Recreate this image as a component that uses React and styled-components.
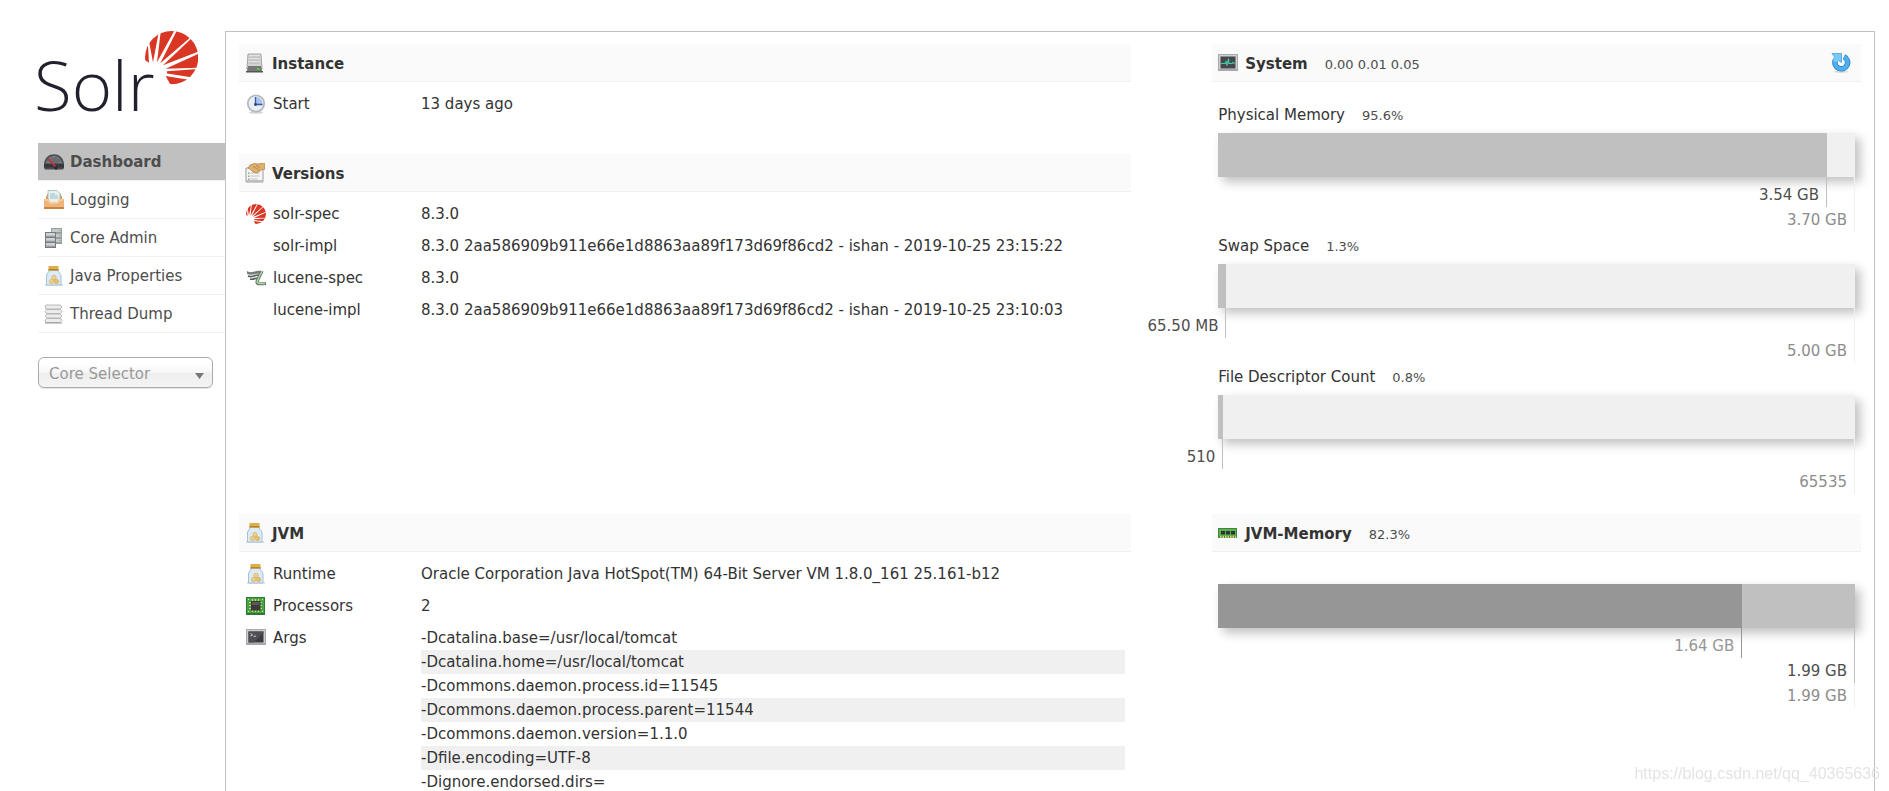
import { styled, createGlobalStyle } from 'styled-components';

const navItems = [
  { label: 'Dashboard', icon: 'gauge', active: true },
  { label: 'Logging', icon: 'tray' },
  { label: 'Core Admin', icon: 'racks' },
  { label: 'Java Properties', icon: 'jar' },
  { label: 'Thread Dump', icon: 'stack' },
];

const versions = [
  { label: 'solr-spec', icon: 'sun', value: '8.3.0' },
  { label: 'solr-impl', value: '8.3.0 2aa586909b911e66e1d8863aa89f173d69f86cd2 - ishan - 2019-10-25 23:15:22' },
  { label: 'lucene-spec', icon: 'lucene', value: '8.3.0' },
  { label: 'lucene-impl', value: '8.3.0 2aa586909b911e66e1d8863aa89f173d69f86cd2 - ishan - 2019-10-25 23:10:03' },
];

const args = [
  '-Dcatalina.base=/usr/local/tomcat',
  '-Dcatalina.home=/usr/local/tomcat',
  '-Dcommons.daemon.process.id=11545',
  '-Dcommons.daemon.process.parent=11544',
  '-Dcommons.daemon.version=1.1.0',
  '-Dfile.encoding=UTF-8',
  '-Dignore.endorsed.dirs=',
];

const tones = {
  total: { bar: '#f0f0f0', text: '#8d8d8d' },
  max: { bar: '#c0c0c0', text: '#4d4d4d' },
  used: { bar: '#969696', text: '#969696' },
};

const systemBars = [
  {
    label: 'Physical Memory',
    percent: '95.6%',
    marks: [
      { tone: 'max', share: 95.6, text: '3.54 GB' },
      { tone: 'total', share: 100, text: '3.70 GB' },
    ],
  },
  {
    label: 'Swap Space',
    percent: '1.3%',
    marks: [
      { tone: 'max', share: 1.3, text: '65.50 MB' },
      { tone: 'total', share: 100, text: '5.00 GB' },
    ],
  },
  {
    label: 'File Descriptor Count',
    percent: '0.8%',
    marks: [
      { tone: 'max', share: 0.8, text: '510' },
      { tone: 'total', share: 100, text: '65535' },
    ],
  },
];

const jvmMarks = [
  { tone: 'used', share: 82.3, text: '1.64 GB' },
  { tone: 'max', share: 100, text: '1.99 GB' },
  { tone: 'total', share: 100, text: '1.99 GB' },
];

/* rays of the Solr sun, drawn on a 160 x 160 disc */
const SunRays = () => (
  <>
    <clipPath id="disc"><circle cx="80" cy="80" r="80" /></clipPath>
    <g clipPath="url(#disc)" fill="#d93624">
      <path d="M12 95 L-12 80 L8 26 Z" />
      <path d="M24 94 L12 30 L36 -6 L42 0 Z" />
      <path d="M36 94 L48 -4 L92 -8 Z" />
      <path d="M46 97 L98 -6 L142 14 Z" />
      <path d="M54 103 L144 18 L170 58 Z" />
      <path d="M62 113 L170 64 L168 110 Z" />
      <path d="M66 121 L166 114 L158 142 L66 128 Z" />
      <path d="M62 135 L140 148 L110 170 L76 160 Z" />
    </g>
  </>
);

/* every drawing sits on a 20 x 20 canvas */
const drawings = {
  server: (
    <>
      <path d="M3 1h13l1 15H2z" fill="#d3d3d3" stroke="#a5a5a5" />
      <path d="M4 3h11M4 6h11M4 9h11" stroke="#f2f2f2" />
      <path d="M4 4h11M4 7h11M4 10h11" stroke="#b3b3b3" />
      <path d="M3 13h13l1 5H2z" fill="#777" />
      <path d="M1 18h17v1.500H1z" fill="#555" />
      <path d="M12 15h2.500v2H12z" fill="#4fd23c" />
    </>
  ),
  clock: (
    <>
      <ellipse cx="10" cy="18.500" rx="7" ry="1.300" fill="#d5d5d5" />
      <circle cx="10" cy="9.500" r="8.200" fill="#e9eef2" stroke="#b3bbc1" strokeWidth="1.800" />
      <path d="M10 10V3a6.800 6.800 0 0 1 6.500 7z" fill="#a9c2ee" />
      <path d="M9.500 3v8M9 10.500h7.500" stroke="#3a58b4" strokeWidth="1.300" />
      <circle cx="9.500" cy="10.500" r="1.400" fill="#37425a" />
    </>
  ),
  clipboard: (
    <>
      <path d="M1 5h17v14H1z" fill="#f5f5f5" stroke="#9b9b9b" />
      <path d="M1.500 17h16v2h-16z" fill="#bdbdbd" />
      <path d="M5.500 10h9M5.500 13h9M5.500 16h7" stroke="#c3c3c3" />
      <path d="M3 9.500h1.500v1.500H3z" fill="#6cc060" />
      <path d="M3 12.500h1.500V14H3z" fill="#e08080" />
      <path d="M3 15.500h1.500V17H3z" fill="#80a0e0" />
      <path d="M5 2l4-1.500 4 .5 7-1v6l-4 1-4 3-4-1-3-3-2-1z" fill="#deb070" stroke="#b98847" strokeWidth=".8" />
      <path d="M8 3.500l3 1.500 4 3M11 2l4 3" stroke="#a9783a" strokeWidth=".7" fill="none" />
    </>
  ),
  sun: <g transform="scale(.125)"><SunRays /></g>,
  lucene: (
    <>
      <path d="M1 3c5 3 8-1 14 0l-1 3C9 5 6 8 1 6z" fill="#777e77" />
      <path d="M2 8c4 2 6-1 11-1M4 11c3 1 5-1 8-1" stroke="#555b55" strokeWidth="1.700" fill="none" />
      <path d="M16 3c-1 3-4 7-5 11 0 2 2 2 9 1.500" stroke="#5f7a60" strokeWidth="3.200" fill="none" />
      <path d="M16 3c-1 3-4 7-5 11 0 1.500 2 1.500 8 1.500" stroke="#b6d3b4" strokeWidth="1.400" fill="none" />
    </>
  ),
  jar: (
    <>
      <path d="M1 18.500h18v1H1z" fill="#b9c4cc" />
      <path d="M5 4h9c0 3 3 3 3 6v9H2.500v-9C2.500 7 5 7 5 4z" fill="#dcebf6" stroke="#a4c1d8" />
      <path d="M4.500 0h10v4.500h-10z" fill="#dcae4c" />
      <path d="M4.500 3h10v1.500h-10z" fill="#b5852d" />
      <circle cx="10" cy="11.500" r="2.200" fill="#ecd08c" stroke="#d0a95c" strokeWidth=".6" />
      <circle cx="7.500" cy="15.500" r="2.200" fill="#ecd08c" stroke="#d0a95c" strokeWidth=".6" />
      <circle cx="12.500" cy="15.500" r="2.200" fill="#e4c070" stroke="#d0a95c" strokeWidth=".6" />
    </>
  ),
  cpu: (
    <>
      <path d="M0 1h19v18H0z" fill="#2e7a32" />
      <path d="M1 2h17v15H1z" fill="#49a347" />
      <path d="M6.500 3v13M9.500 3v13M12.500 3v13M3 6.500h13M3 9.500h13M3 12.500h13" stroke="#e0d067" strokeWidth="1.200" />
      <path d="M5 5h9.500v9.500H5z" fill="#3a3a3c" />
      <path d="M6 6h7.500v3H6z" fill="#5a5a5c" />
      <path d="M2 3h1v1H2zM16 3h1v1h-1zM2 15h1v1H2zM16 15h1v1h-1z" fill="#d6f0c0" />
    </>
  ),
  terminal: (
    <>
      <path d="M0 1h20v16H0z" fill="#a9a9a9" />
      <path d="M1 2h18v13H1z" fill="#d0d0d0" />
      <path d="M2.500 3.500h15v11h-15z" fill="#3b3b42" />
      <path d="M2.500 3.500h15v1L8 14.500H2.500z" fill="#4f4f57" />
      <path d="M4.500 5.500l2 1.300-2 1.300M7.500 8.200h2.500" stroke="#ddd" strokeWidth=".9" fill="none" />
    </>
  ),
  monitor: (
    <>
      <path d="M0 1h20v17H0z" fill="#a9a9a9" />
      <path d="M1 2h18v14H1z" fill="#d0d0d0" />
      <path d="M2.500 3.500h15v12h-15z" fill="#46464d" />
      <path d="M3 10.500h4l1-2 1 4 1.500-7 .5 5h3l1-1 2 1" stroke="#41cda5" strokeWidth="1.100" fill="none" />
    </>
  ),
  ram: (
    <>
      <path d="M0 5h19v10H0z" fill="#3b8a38" />
      <path d="M1 6h17v7H1z" fill="#5cb253" />
      <path d="M3 8h4v3.500H3zM8 8h4v3.500H8zM13 8h4v3.500h-4z" fill="#2f3331" />
      <path d="M2 14h16" stroke="#dccf74" strokeWidth="2" strokeDasharray="1.500 1" />
    </>
  ),
  gauge: (
    <>
      <path d="M0 12C1-1 19-1 20 12v4l-1 1.500H1L0 16z" fill="#4a4c51" />
      <path d="M1.500 11.500C3 1 17 1 18.500 11.500z" fill="#696c72" />
      <path d="M3.500 10l1 .5M6 5.500l1 1M10 4v1.500M14 5.500l-1 1M16.500 10l-1 .5" stroke="#b9bcc1" strokeWidth=".7" />
      <path d="M0 12h20v3.500H0z" fill="#36383c" />
      <path d="M4 6.500l8 8.500" stroke="#c8323a" strokeWidth="1.700" />
      <circle cx="12" cy="16" r="1.800" fill="#2a2b2e" />
    </>
  ),
  tray: (
    <>
      <path d="M2 7l2-4h12l2 4v5H2z" fill="#d8985a" />
      <path d="M4 .500h9l3 3v9H4z" fill="#e6f1f2" stroke="#9fb7ba" strokeWidth=".8" />
      <path d="M6 4h5M6 6h8M6 8h8" stroke="#9dbcc0" />
      <path d="M0 9h5l1.500 3h7L15 9h5v10H0z" fill="#edb57a" />
      <path d="M0 17h20v2H0z" fill="#c98444" />
      <path d="M1 10h3.500l1.500 3h8l1.500-3H19" stroke="#fbe0bd" fill="none" />
    </>
  ),
  racks: (
    <>
      <path d="M7 0h11v16H7z" fill="#9a9d9f" />
      <path d="M8 1h9v3H8zM8 6h9v3H8zM8 11h9v3H8z" fill="#c5c9cc" />
      <path d="M1 4h11v16H1z" fill="#777b7e" />
      <path d="M2 5h9v3.500H2zM2 10h9v3.500H2zM2 15h9v3.500H2z" fill="#bcc1c4" />
      <path d="M2 6h9M2 11h9M2 16h9" stroke="#e3e6e8" />
      <path d="M15 2.500h1.500M15 7.500h1.500M15 12.500h1.500" stroke="#6bbb62" />
    </>
  ),
  stack: (
    <>
      <path d="M2 1h14l2 2-2 2 2 2-2 2 2 2-2 2 2 2-2 4H1l2-4-2-2 2-2-2-2 2-2-2-2z" fill="#d9d9d9" />
      <path d="M2 1h14l2 2-2 2H3L1 3zM3 5.500h13l2 2-2 2H3l-2-2zM3 10h13l2 2-2 2H3l-2-2zM3 14.500h13l2 2-2 2H2l-1-2z" fill="#ececec" stroke="#b2b2b2" strokeWidth=".9" />
      <path d="M1 19h17" stroke="#999" />
    </>
  ),
  refresh: (
    <>
      <ellipse cx="10" cy="18.700" rx="7" ry="1.200" fill="#dadada" />
      <path d="M13 3.800a6.300 6.300 0 1 1-8.500 3.200" stroke="#2f86cf" strokeWidth="5.600" fill="none" />
      <path d="M13 3.800a6.300 6.300 0 1 1-8.500 3.200" stroke="#4fb0ec" strokeWidth="3.800" fill="none" />
      <path d="M1 .500h9.500v9L7.500 7.500 5 10 1.500 8l2-4z" fill="#79c8f5" stroke="#4a9fdc" strokeWidth=".8" />
    </>
  ),
};

const Icon = ({ name }) => (
  <Glyph viewBox="0 0 20 20" aria-hidden="true">{name && drawings[name]}</Glyph>
);

const Logo = () => (
  <LogoLink href="#/" aria-label="Solr">
    <svg width="164" height="108" viewBox="-4 0 164 108">
      <text x="-4" y="80" fontFamily="Open Sans, sans-serif" fontWeight="300" fontSize="69" fill="#241f2c">Solr</text>
      <g transform="translate(107 0) scale(.333)"><SunRays /></g>
    </svg>
  </LogoLink>
);

const Meter = ({ marks }) => (
  <div>
    <Track>
      {[...marks].reverse().map((mark) => (
        <Fill key={mark.tone} $tone={mark.tone} style={{ width: `${mark.share}%` }} />
      ))}
    </Track>
    <Marks>
      {[...marks].reverse().map((mark) => (
        <Mark
          key={mark.tone}
          $tone={mark.tone}
          $level={marks.indexOf(mark)}
          style={{ width: `${mark.share}%` }}
        >
          <span>{mark.text}</span>
        </Mark>
      ))}
    </Marks>
  </div>
);

const Block = ({ title, icon, detail, action, children }) => (
  <section>
    <BlockHead>
      <Icon name={icon} />
      <Heading>
        <h2>{title}</h2>
        {detail && <Small>{detail}</Small>}
      </Heading>
      {action}
    </BlockHead>
    {children}
  </section>
);

const Fact = ({ label, icon, children }) => (
  <FactRow>
    <dt><Icon name={icon} />{label}</dt>
    <dd>{children}</dd>
  </FactRow>
);

const App = () => {
  return (
    <>
      <GlobalStyle />
      <Page>
        <Sidebar>
          <Logo />
          <Menu aria-label="Main">
            {navItems.map(({ label, icon, active }) => (
              <MenuLink key={label} href="#/" $active={active}>
                <Icon name={icon} />{label}
              </MenuLink>
            ))}
          </Menu>
          <Selector>
            <select aria-label="Core Selector" defaultValue="">
              <option value="">Core Selector</option>
            </select>
            <svg width="9" height="6" viewBox="0 0 9 6" aria-hidden="true">
              <path d="M0 0h9L4.500 6z" fill="#777" />
            </svg>
          </Selector>
        </Sidebar>
        <Content>
          <LeftColumn>
            <Block title="Instance" icon="server">
              <Facts>
                <Fact label="Start" icon="clock">13 days ago</Fact>
              </Facts>
            </Block>
            <Block title="Versions" icon="clipboard">
              <Facts>
                {versions.map(({ label, icon, value }) => (
                  <Fact key={label} label={label} icon={icon}>{value}</Fact>
                ))}
              </Facts>
            </Block>
          </LeftColumn>
          <Block
            title="System"
            icon="monitor"
            detail="0.00 0.01 0.05"
            action={<Reload type="button" aria-label="Reload"><Icon name="refresh" /></Reload>}
          >
            <SystemBody>
              {systemBars.map(({ label, percent, marks }) => (
                <div key={label}>
                  <MeterTitle><h3>{label}</h3><Small>{percent}</Small></MeterTitle>
                  <Meter marks={marks} />
                </div>
              ))}
            </SystemBody>
          </Block>
          <Block title="JVM" icon="jar">
            <Facts>
              <Fact label="Runtime" icon="jar">
                Oracle Corporation Java HotSpot(TM) 64-Bit Server VM 1.8.0_161 25.161-b12
              </Fact>
              <Fact label="Processors" icon="cpu">2</Fact>
              <Fact label="Args" icon="terminal">
                <ArgList>
                  {args.map((arg) => <li key={arg}>{arg}</li>)}
                </ArgList>
              </Fact>
            </Facts>
          </Block>
          <Block title="JVM-Memory" icon="ram" detail="82.3%">
            <JvmBody><Meter marks={jvmMarks} /></JvmBody>
          </Block>
        </Content>
        <Watermark>https://blog.csdn.net/qq_40365636</Watermark>
      </Page>
    </>
  );
};

const GlobalStyle = createGlobalStyle`
  * {
    box-sizing: border-box;
    margin: 0;
    padding: 0;
  }

  body {
    background: #fff;
    color: #333;
    font: 15px/24px Verdana, "DejaVu Sans", sans-serif;
  }

  a {
    color: inherit;
    text-decoration: none;
  }
`;

const Page = styled.div`
  display: flex;
  min-height: 100vh;
  padding: 31px 14px 0 38px;
`;

const Sidebar = styled.header`
  flex: 0 0 187px;
`;

const LogoLink = styled.a`
  display: block;
  height: 112px;

  svg {
    display: block;
    margin-left: -4px;
  }
`;

const Glyph = styled.svg`
  flex: none;
  width: 20px;
  height: 20px;
`;

const Menu = styled.nav`
  display: flex;
  flex-direction: column;
`;

const MenuLink = styled.a`
  display: flex;
  align-items: center;
  gap: 6px;
  height: 38px;
  padding-left: 6px;
  border-bottom: 1px solid #f0f0f0;
  color: #4d4d4d;
  background: ${({ $active }) => ($active ? '#c0c0c0' : 'none')};
  background-clip: padding-box;
  font-weight: ${({ $active }) => ($active ? 'bold' : 'normal')};
`;

const Selector = styled.div`
  display: grid;
  align-items: center;
  margin: 24px 12px 0 0;

  select {
    grid-area: 1 / 1;
    width: 100%;
    height: 31px;
    padding: 2px 0 0 10px;
    appearance: none;
    border: 1px solid #aaa;
    border-radius: 6px;
    background: linear-gradient(#fff 20%, #f6f6f6 50%, #eee 52%, #f4f4f4);
    box-shadow: 0 1px 1px #e4e4e4;
    color: #999;
    font: inherit;
  }

  svg {
    grid-area: 1 / 1;
    justify-self: end;
    margin: 6px 9px 0 0;
    pointer-events: none;
  }
`;

const Content = styled.main`
  flex: 1;
  display: grid;
  grid-template-columns: 55% 40%;
  grid-template-rows: auto 1fr;
  justify-content: space-between;
  row-gap: 20px;
  min-width: 0;
  padding: 12px 13px 0;
  border: 1px solid #c0c0c0;
  border-bottom: 0;
`;

const LeftColumn = styled.div`
  display: flex;
  flex-direction: column;
  gap: 38px;
`;

const BlockHead = styled.div`
  display: flex;
  align-items: center;
  gap: 7px;
  height: 38px;
  padding: 0 10px 0 6px;
  border-bottom: 1px solid #f0f0f0;
  background: #fafafa;
`;

const Small = styled.span`
  color: #4d4d4d;
  font-size: 13px;
  line-height: 16px;
`;

const Heading = styled.div`
  display: flex;
  align-items: baseline;
  gap: 17px;
  padding-top: 2px;

  h2 {
    font-size: 15px;
  }
`;

const Reload = styled.button`
  display: flex;
  margin-left: auto;
  border: 0;
  background: none;
  cursor: pointer;
`;

const Facts = styled.dl`
  display: flex;
  flex-direction: column;
  gap: 8px;
  padding: 10px 6px 0 7px;
`;

const FactRow = styled.div`
  display: grid;
  grid-template-columns: 175px 1fr;

  dt {
    display: flex;
    align-items: center;
    align-self: start;
    gap: 7px;
    height: 24px;
  }
`;

const ArgList = styled.ul`
  list-style: none;

  li:nth-child(even) {
    background: #f0f0f0;
  }
`;

const SystemBody = styled.div`
  padding: 19px 6px 0;
`;

const JvmBody = styled.div`
  padding: 32px 6px 0;
`;

const MeterTitle = styled.div`
  display: flex;
  align-items: baseline;
  gap: 17px;
  height: 32px;

  h3 {
    font-size: 15px;
    font-weight: normal;
    line-height: 28px;
  }
`;

const Track = styled.div`
  display: grid;
  height: 44px;
  box-shadow: 5px 5px 10px #c0c0c0;
`;

const Fill = styled.div`
  grid-area: 1 / 1;
  background: ${({ $tone }) => tones[$tone].bar};
`;

const Marks = styled.div`
  display: grid;
`;

/* each tick hangs one step lower than the one before it */
const Mark = styled.div`
  grid-area: 1 / 1;
  display: flex;
  align-items: flex-end;
  justify-content: flex-end;
  height: ${({ $level }) => 30 + $level * 25}px;
  border-right: 1px solid ${({ $tone }) => tones[$tone].bar};
  color: ${({ $tone }) => tones[$tone].text};
  white-space: nowrap;

  span {
    flex: none;
    padding-right: 7px;
  }
`;

const Watermark = styled.p`
  position: fixed;
  right: 9px;
  bottom: 5px;
  color: #e4e4e4;
  font: 16px/24px "Liberation Sans", Arial, sans-serif;
`;

export default App
